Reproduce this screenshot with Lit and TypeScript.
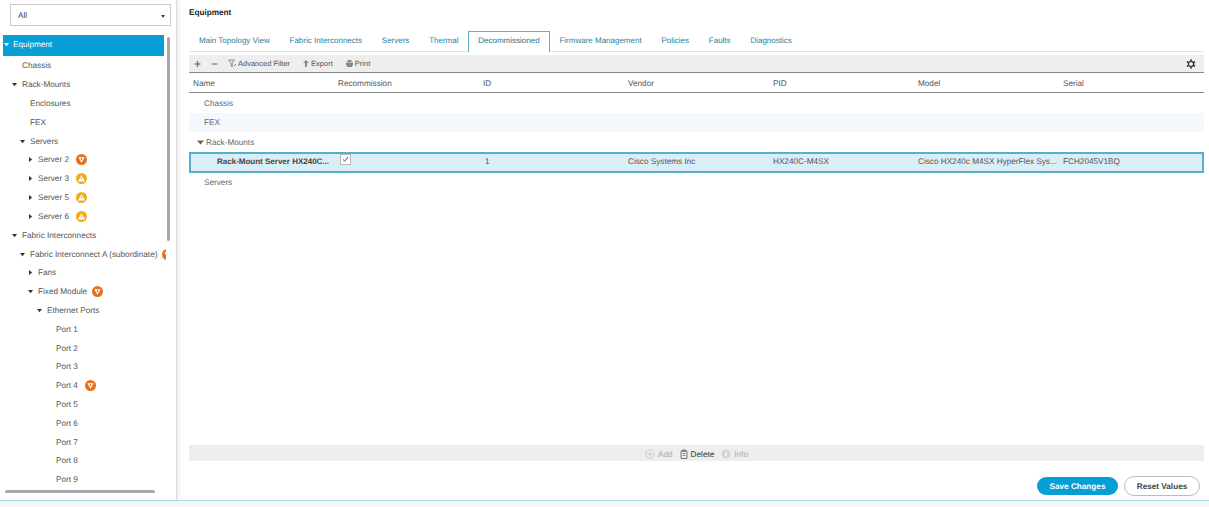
import { LitElement, html, css, svg } from "lit";
import { customElement } from "lit/decorators.js";

const F = "#e8701f", W = "#f0ac1d";
const tri = (open: boolean) => html`<svg class="tw" width="5" height="5" viewBox="0 0 6 6">${open ? svg`<path d="M0 1.2h6L3 5z" fill="#333"/>` : svg`<path d="M1.2 0v6L5 3z" fill="#333"/>`}</svg>`;
const major = (gap: number) => html`<svg class="bd" style="margin-left:${gap}px" width="11" height="11" viewBox="0 0 11 11"><circle cx="5.5" cy="5.5" r="5.5" fill="${F}"/><path d="M2.4 3.2h6.2L5.5 8.8z" fill="#fff"/><path d="M5.5 4v2.2" stroke="${F}" stroke-width="1.2"/></svg>`;
const warn = (gap: number) => html`<svg class="bd" style="margin-left:${gap}px" width="11" height="11" viewBox="0 0 11 11"><circle cx="5.5" cy="5.5" r="5.5" fill="${W}"/><path d="M5.5 2.2L9 8.4H2z" fill="#fff"/><path d="M5.5 4.2v2.2" stroke="${W}" stroke-width="1.1"/></svg>`;

type Node = [string, number, "o" | "c" | "", ("m" | "w" | "")?, number?];
const nodes: Node[] = [
  ["Chassis", 22, ""],
  ["Rack-Mounts", 22, "o"],
  ["Enclosures", 30, ""],
  ["FEX", 30, ""],
  ["Servers", 30, "o"],
  ["Server 2", 38, "c", "m"],
  ["Server 3", 38, "c", "w"],
  ["Server 5", 38, "c", "w"],
  ["Server 6", 38, "c", "w"],
  ["Fabric Interconnects", 22, "o"],
  ["Fabric Interconnect A (subordinate)", 30, "o", "m", 5],
  ["Fans", 38, "c"],
  ["Fixed Module", 38, "o", "m", 5],
  ["Ethernet Ports", 47, "o"],
  ["Port 1", 56, ""],
  ["Port 2", 56, ""],
  ["Port 3", 56, ""],
  ["Port 4", 56, "", "m"],
  ["Port 5", 56, ""],
  ["Port 6", 56, ""],
  ["Port 7", 56, ""],
  ["Port 8", 56, ""],
  ["Port 9", 56, ""],
];
const tabs = ["Main Topology View", "Fabric Interconnects", "Servers", "Thermal", "Decommissioned", "Firmware Management", "Policies", "Faults", "Diagnostics"];
const cols = ["Name", "Recommission", "ID", "Vendor", "PID", "Model", "Serial"];

@customElement("app-root")
export class AppRoot extends LitElement {
  static styles = css`
    :host { display: block; width: 1209px; height: 507px; overflow: hidden; background: #fff; font-family: "Liberation Sans", Arial, sans-serif; font-size: 8.2px; color: #555; text-rendering: geometricPrecision; }
    .app { display: flex; height: 500px; }
    .side { position: relative; width: 176px; height: 500px; flex: none; overflow: hidden; border-right: 1px solid #dcdcdc; box-sizing: content-box; box-shadow: 2px 0 4px rgba(0,0,0,.08); }
    .sel { margin: 4px 5px 0 10px; height: 22px; border: 1px solid #ccc; box-sizing: border-box; display: flex; align-items: center; justify-content: space-between; padding: 0 5px 0 7px; color: #444; }
    .sel i { width: 0; height: 0; border: 2.5px solid transparent; border-top: 3px solid #444; margin-top: 4px; }
    .root { margin: 9px 0 0 3px; width: 161px; height: 21px; background: #069ed4; color: #fff; display: flex; align-items: center; padding: 0 0 2px 1px; box-sizing: border-box; }
    .root .tw { margin-right: 4px; }
    .root .tw path { fill: #fff; }
    .tree { width: 165.5px; overflow: hidden; padding-top: .5px; }
    .row { height: 18.82px; display: flex; align-items: center; white-space: nowrap; color: #555; }
    .row .tw { margin-left: -10px; margin-right: 5px; flex: none; }
    .bd { flex: none; }
    .vbar { position: absolute; left: 167px; top: 37px; width: 3px; height: 204px; background: #a8a8a8; border-radius: 2px; }
    .hbar { position: absolute; left: 5px; top: 490px; width: 150px; height: 3px; background: #a8a8a8; border-radius: 2px; }
    .main { flex: 1; padding: 0 5px 0 12px; min-width: 0; }
    .title { height: 31px; padding-top: 8px; box-sizing: border-box; font-weight: 700; color: #222; }
    .tabs { display: flex; height: 21px; border-bottom: 1px solid #e4e4e4; box-sizing: border-box; font-size: 8px; }
    .tab { padding: 0 8.9px; line-height: 17px; color: #1f7f9d; white-space: nowrap; border: 1px solid transparent; border-bottom: none; }
    .tab.on { border-color: #5eb4cd; background: #fff; height: 20px; color: #2b7288; }
    .tools { margin-top: 3px; height: 18px; background: #eee; border-bottom: 1px solid #8a8a8a; box-sizing: border-box; display: flex; align-items: center; padding: 0 8px 0 5px; color: #555; gap: 4px; font-size: 7.5px; }
    .tools span { display: inline-flex; align-items: center; gap: 1px; }
    .tools .sym { font-size: 12px; width: 13px; }
    .tools .next { margin-left: 8px; }
    .tools .gear { margin-left: auto; }
    .grid { display: grid; grid-template-columns: repeat(7, 145px); align-items: center; }
    .head { height: 20px; padding-top: 1px; border-bottom: 1px solid #8a8a8a; box-sizing: border-box; }
    .grid > div { padding-left: 4px; white-space: nowrap; }
    .rw { height: 19.5px; display: flex; align-items: center; padding-left: 15px; color: #666; box-sizing: border-box; }
    .rw.alt { background: #f3f9fc; }
    .rw.low { padding-top: 1px; }
    .rw.rm { padding-left: 8px; }
    .rw.rm svg { margin-right: 2px; }
    .rsel { height: 21px; background: #daeef7; border: 2px solid #58aecb; box-sizing: border-box; color: #555; }
    .cells { display: grid; grid-template-columns: 143px 145px 145px 145px 145px 145px 141px; align-items: center; height: 15px; }
    .cells > div { padding-left: 4px; white-space: nowrap; }
    .cells > .nm { padding-left: 26px; font-weight: 700; color: #444; font-size: 8px; }
    .cells > .ck { padding-left: 6px; }
    .cells > .one { padding-left: 6px; }
    .chk { width: 11px; height: 11px; background: #fff; border: 1px solid #bbb; box-sizing: border-box; display: block; margin-top: -3px; }
    .body { height: 352px; }
    .actions { height: 16px; background: #eee; display: flex; justify-content: center; align-items: center; gap: 7px; color: #aaa; padding-top: 2px; box-sizing: border-box; }
    .actions span { display: inline-flex; align-items: center; gap: 3px; }
    .actions .del { color: #333; }
    .foot { display: flex; justify-content: flex-end; gap: 6px; margin-top: 15px; padding-right: 4px; }
    .btn { height: 18px; border-radius: 9px; display: flex; align-items: center; justify-content: center; font-weight: 700; box-sizing: border-box; }
    .save { width: 81px; background: #069ed4; color: #fff; margin-top: 1px; }
    .reset { width: 76px; height: 20px; background: #fff; border: 1px solid #bbb; color: #444; border-radius: 10px; }
    .line { height: 1px; background: #a9d8ee; }
    .under { height: 6px; background: #f6f6f6; }
  `;

  render() {
    return html`
      <div class="app">
        <aside class="side">
          <div class="sel"><span>All</span><i></i></div>
          <div class="root">${tri(true)}<span>Equipment</span></div>
          <div class="tree">
            ${nodes.map(([t, x, tw, b, g]) => html`
              <div class="row" style="padding-left:${x}px">
                ${tw ? tri(tw === "o") : ""}<span>${t}</span>
                ${b === "m" ? major(g ?? 7) : b === "w" ? warn(g ?? 7) : ""}
              </div>`)}
          </div>
          <div class="vbar"></div>
          <div class="hbar"></div>
        </aside>
        <main class="main">
          <div class="title">Equipment</div>
          <div class="tabs">${tabs.map((t) => html`<div class="tab ${t === "Decommissioned" ? "on" : ""}">${t}</div>`)}</div>
          <div class="tools">
            <span class="sym">+</span>
            <span class="sym">−</span>
            <span><svg width="9" height="9" viewBox="0 0 9 9"><path d="M.5 1h6L4.2 4v4L3 7V4z" fill="none" stroke="#777" stroke-width=".8"/><path d="M6 7l2-2" stroke="#777"/></svg>Advanced Filter</span>
            <span class="next"><svg width="8" height="9" viewBox="0 0 8 9"><path d="M4 1L1 4h2v4h2V4h2z" fill="#888"/></svg>Export</span>
            <span class="next"><svg width="9" height="9" viewBox="0 0 9 9"><path d="M2.5 1h4v2h-4zM1 3.5h7v3H7V8H2V6.5H1z" fill="#888"/></svg>Print</span>
            <svg class="gear" width="10" height="10" viewBox="0 0 10 10"><circle cx="5" cy="5" r="2.6" fill="none" stroke="#333" stroke-width="1.3"/><path d="M5 .3v2M5 7.7v2M.9 2.6l1.7 1M7.4 6.4l1.7 1M.9 7.4l1.7-1M7.4 3.6l1.7-1" stroke="#333" stroke-width="1.4"/></svg>
          </div>
          <div class="grid head">${cols.map((c) => html`<div>${c}</div>`)}</div>
          <div class="body">
            <div class="rw low">Chassis</div>
            <div class="rw alt">FEX</div>
            <div class="rw rm low"><svg width="7" height="5" viewBox="0 0 7 5"><path d="M0 .5h7L3.5 4.5z" fill="#666"/></svg>Rack-Mounts</div>
            <div class="rsel"><div class="cells">
              <div class="nm">Rack-Mount Server HX240C...</div>
              <div class="ck"><svg class="chk" viewBox="0 0 11 11"><path d="M2.5 5.5l2 2 4-5" fill="none" stroke="#333" stroke-width="1.1"/></svg></div>
              <div class="one">1</div><div>Cisco Systems Inc</div><div>HX240C-M4SX</div><div>Cisco HX240c M4SX HyperFlex Sys...</div><div>FCH2045V1BQ</div>
            </div></div>
            <div class="rw">Servers</div>
          </div>
          <div class="actions">
            <span><svg width="10" height="10" viewBox="0 0 10 10"><circle cx="5" cy="5" r="4.4" fill="none" stroke="#ccc"/><path d="M5 2.5v5M2.5 5h5" stroke="#ccc"/></svg>Add</span>
            <span class="del"><svg width="8" height="10" viewBox="0 0 8 10"><path d="M1 2h6v7.5H1zM2.5 1h3v1h-3z" fill="none" stroke="#666" stroke-width=".9"/><path d="M2.5 4.5h3M2.5 6.5h3" stroke="#666" stroke-width=".8"/></svg>Delete</span>
            <span><svg width="10" height="10" viewBox="0 0 10 10"><circle cx="5" cy="5" r="4.5" fill="#d4d4d4"/><path d="M5 4.3v3.2M5 2.4v1" stroke="#fff" stroke-width="1.2"/></svg>Info</span>
          </div>
          <div class="foot">
            <div class="btn save">Save Changes</div>
            <div class="btn reset">Reset Values</div>
          </div>
        </main>
      </div>
      <div class="line"></div>
      <div class="under"></div>
    `;
  }
}
